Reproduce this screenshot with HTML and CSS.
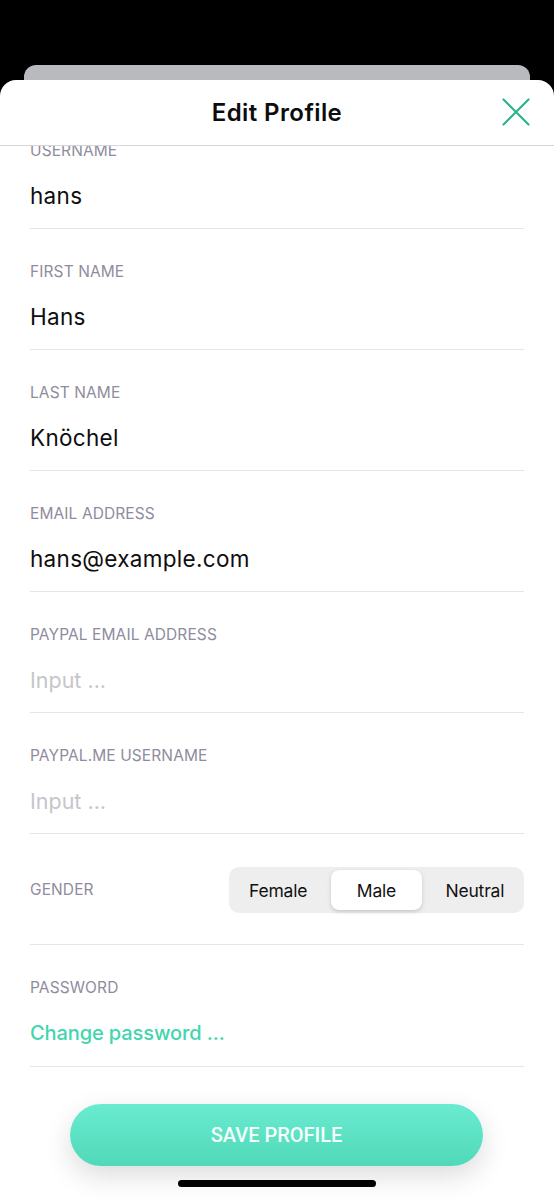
FILE: index.html
```html
<!DOCTYPE html>
<html lang="en">
<head>
<meta charset="utf-8">
<title>Edit Profile</title>
<link rel="stylesheet" href="styles.css">
</head>
<body>
<div class="screen">
  <div class="backcard"></div>
  <div class="sheet">
    <header class="sheet-header">
      <h1 class="title">Edit Profile</h1>
      <button class="close" aria-label="Close">
        <svg width="28" height="28" viewBox="0 0 28 28"><path d="M1.5 1.5 L26.5 26.5 M26.5 1.5 L1.5 26.5" stroke="#2cb38f" stroke-width="2.2" fill="none" stroke-linecap="round"/></svg>
      </button>
    </header>
    <div class="content">
      <div class="fields">
        <div class="field">
          <div class="label">USERNAME</div>
          <div class="value">hans</div>
        </div>
        <div class="field">
          <div class="label">FIRST NAME</div>
          <div class="value">Hans</div>
        </div>
        <div class="field">
          <div class="label">LAST NAME</div>
          <div class="value">Knöchel</div>
        </div>
        <div class="field">
          <div class="label">EMAIL ADDRESS</div>
          <div class="value">hans@example.com</div>
        </div>
        <div class="field">
          <div class="label">PAYPAL EMAIL ADDRESS</div>
          <div class="value placeholder">Input ...</div>
        </div>
        <div class="field">
          <div class="label">PAYPAL.ME USERNAME</div>
          <div class="value placeholder">Input ...</div>
        </div>
        <div class="field field-row">
          <div class="label">GENDER</div>
          <div class="segmented">
            <div class="seg">Female</div>
            <div class="seg active">Male</div>
            <div class="seg">Neutral</div>
          </div>
        </div>
        <div class="field field-last">
          <div class="label">PASSWORD</div>
          <div class="value link">Change password ...</div>
        </div>
      </div>
      <button class="save">SAVE PROFILE</button>
      <div class="home-indicator"></div>
    </div>
  </div>
</div>
</body>
</html>
```
FILE: styles.css
```css
* { box-sizing: border-box; }
html, body {
  margin: 0;
  padding: 0;
  background: #000;
}
body {
  font-family: Inter, "Noto Sans", "Liberation Sans", sans-serif;
  color: #111;
}
.screen {
  width: 554px;
  height: 1200px;
  padding-top: 65px;
  display: flex;
  flex-direction: column;
  overflow: hidden;
}
.backcard {
  height: 15px;
  margin: 0 24px;
  background: #b9babe;
  border-radius: 12px 12px 0 0;
  flex: none;
}
.sheet {
  flex: 1;
  background: #fff;
  border-radius: 16px 16px 0 0;
  display: flex;
  flex-direction: column;
  overflow: hidden;
}
.sheet-header {
  height: 66px;
  flex: none;
  border-bottom: 1px solid #d6d6da;
  display: flex;
  align-items: center;
  justify-content: center;
  position: relative;
}
.title {
  margin: 0;
  font-size: 24px;
  font-weight: 600;
  letter-spacing: 0.4px;
  color: #0d0d0d;
}
.close {
  position: absolute;
  right: 24px;
  top: 18px;
  width: 28px;
  height: 28px;
  padding: 0;
  border: 0;
  background: none;
  display: flex;
}
.content {
  flex: 1;
  position: relative;
  overflow: hidden;
}
.fields {
  margin-top: -38px;
  padding: 0 30px;
}
.field {
  padding-top: 35px;
  padding-bottom: 18px;
  border-bottom: 1px solid #e4e4e9;
}
.field-last {
  padding-bottom: 19px;
}
.label {
  font-size: 15.5px;
  line-height: 16px;
  color: #8e8c9d;
  letter-spacing: 0.1px;
}
.value {
  margin-top: 23px;
  font-size: 22.5px;
  line-height: 28px;
  color: #0e0e0e;
  letter-spacing: 0.3px;
}
.placeholder {
  color: #c6c6ca;
  font-size: 21.5px;
  letter-spacing: 0;
}
.link {
  color: #43d5ad;
  font-weight: 500;
  font-size: 20px;
  letter-spacing: -0.1px;
}
.field-row {
  display: flex;
  align-items: center;
  justify-content: space-between;
  padding-top: 33px;
  padding-bottom: 31px;
}
.segmented {
  width: 295px;
  height: 46px;
  background: #eeeeef;
  border-radius: 10px;
  padding: 3px;
  display: grid;
  grid-template-columns: 1fr 1fr 1fr;
}
.seg {
  display: flex;
  align-items: center;
  justify-content: center;
  font-size: 17.5px;
  color: #111;
  border-radius: 8px;
  letter-spacing: -0.2px;
}
.seg:first-child { padding-right: 4px; }
.seg:last-child { padding-left: 4px; }
.seg.active {
  background: #fff;
  margin: 0 3px;
  box-shadow: 0 2px 4px rgba(0,0,0,0.15), 0 0 1px rgba(0,0,0,0.1);
}
.save {
  position: absolute;
  left: 70px;
  top: 958px;
  width: 413px;
  height: 62px;
  border: 0;
  border-radius: 31px;
  background: linear-gradient(#6aebd0, #50d9b8);
  color: #f4fffb;
  font-family: Roboto, "Liberation Sans", sans-serif;
  font-size: 20px;
  font-weight: 500;
  box-shadow: 0 10px 28px rgba(0,0,0,0.14);
}
.home-indicator {
  position: absolute;
  left: 178px;
  top: 1034px;
  width: 198px;
  height: 7px;
  border-radius: 4px;
  background: #000;
}
```
